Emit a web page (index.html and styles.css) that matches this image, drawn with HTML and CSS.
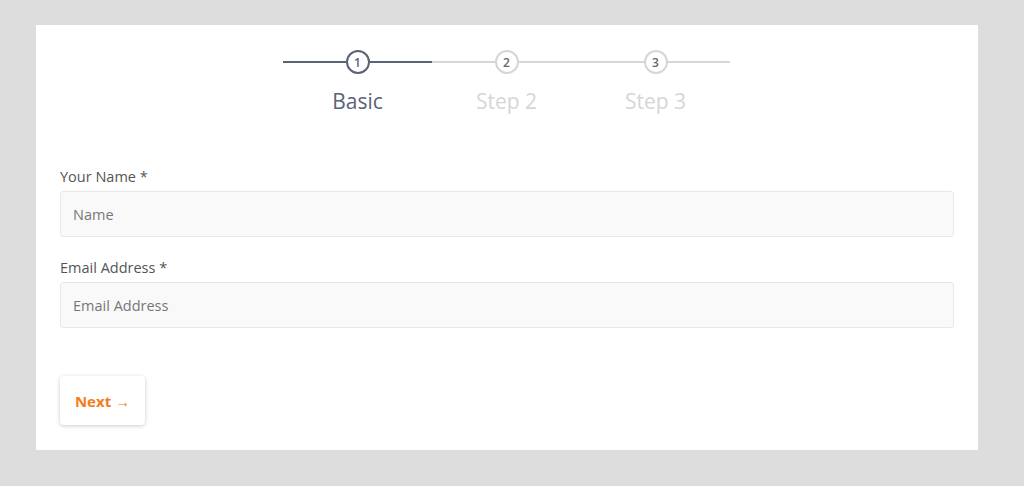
FILE: index.html
```html
<!DOCTYPE html>
<html lang="en">
<head>
    <meta charset="UTF-8">
    <meta name="viewport" content="width=device-width, initial-scale=1.0">
    <title>Multi Step Form</title>
    <link rel="stylesheet" href="styles.css">
</head>
<body>
    <div class="form-card">
        <div class="steps">
            <div class="step active">
                <div class="step-track">
                    <span class="step-line"></span>
                    <span class="step-num">1</span>
                    <span class="step-line"></span>
                </div>
                <div class="step-title">Basic</div>
            </div>
            <div class="step">
                <div class="step-track">
                    <span class="step-line"></span>
                    <span class="step-num">2</span>
                    <span class="step-line"></span>
                </div>
                <div class="step-title">Step 2</div>
            </div>
            <div class="step">
                <div class="step-track">
                    <span class="step-line"></span>
                    <span class="step-num">3</span>
                    <span class="step-line"></span>
                </div>
                <div class="step-title">Step 3</div>
            </div>
        </div>

        <form id="stepForm">
            <div class="form-group">
                <label for="name">Your Name *</label>
                <input type="text" id="name" name="name" placeholder="Name">
            </div>
            <div class="form-group">
                <label for="email">Email Address *</label>
                <input type="email" id="email" name="email" placeholder="Email Address">
            </div>
            <button type="button" class="next-btn">Next &rarr;</button>
        </form>
    </div>
</body>
</html>
```

FILE: styles.css
```css
* {
    box-sizing: border-box;
}
body {
    margin: 0;
    padding: 25px 0 36px 36px;
    background: #dddddd;
    font-family: "Open Sans", "Noto Sans", Arial, sans-serif;
}
.form-card {
    width: 942px;
    background: #fff;
    padding: 25px 24px 25px 24px;
}
.steps {
    display: flex;
    justify-content: center;
    margin-left: -1px;
}
.step {
    width: 149px;
    display: flex;
    flex-direction: column;
    align-items: center;
}
.step-track {
    width: 100%;
    display: flex;
    align-items: center;
}
.step-line {
    flex: 1;
    height: 2px;
    background: #d6d6d6;
}
.step-num {
    width: 24px;
    height: 24px;
    border: 2px solid #d6d6d6;
    border-radius: 50%;
    display: flex;
    align-items: center;
    justify-content: center;
    font-size: 12px;
    font-weight: 600;
    color: #666;
}
.step-title {
    margin-top: 13px;
    font-size: 21px;
    line-height: 28px;
    color: #d6d6d6;
}
.step.active .step-line {
    background: #5b6275;
}
.step.active .step-num {
    border-color: #5b6275;
    color: #5b6275;
}
.step.active .step-title {
    color: #5b6275;
}
form {
    margin-top: 52px;
}
.form-group {
    margin-bottom: 21px;
}
label {
    display: block;
    margin-bottom: 5px;
    font-size: 14.5px;
    line-height: 19px;
    color: #555;
}
input {
    width: 100%;
    height: 46px;
    padding: 0 12px;
    background: #f9f9f9;
    border: 1px solid #e8e8e8;
    border-radius: 3px;
    font-family: inherit;
    font-size: 14.5px;
    color: #555;
}
input::placeholder {
    color: #777;
}
.next-btn {
    margin-top: 27px;
    width: 85px;
    height: 49px;
    background: #fff;
    border: none;
    border-radius: 4px;
    box-shadow: 0 1px 4px rgba(0,0,0,0.2);
    font-family: inherit;
    font-size: 15px;
    font-weight: 700;
    color: #f47b22;
    cursor: pointer;
}
```
